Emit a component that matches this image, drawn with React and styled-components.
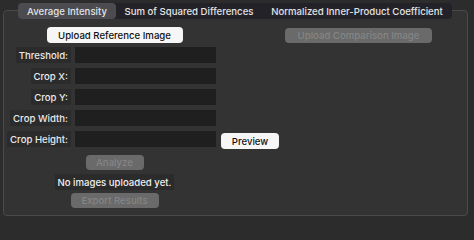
import React from 'react'
import styled, { createGlobalStyle } from 'styled-components'

const GlobalStyle = createGlobalStyle`
  html, body {
    margin: 0;
    padding: 0;
    background: #2c2c2c;
  }
  body {
    width: 474px;
    height: 222px;
    overflow: hidden;
    font-family: Inter, "Liberation Sans", sans-serif;
    font-size: 9.6px;
    font-weight: 500;
    color: #e6e6e6;
  }
`

const tabs = [
  { label: 'Average Intensity', width: 98, active: true },
  { label: 'Sum of Squared Differences', width: 146 },
  { label: 'Normalized Inner-Product Coefficient', width: 190 },
]

const fields = ['Threshold:', 'Crop X:', 'Crop Y:', 'Crop Width:', 'Crop Height:']

const Window = styled.div`
  display: flex;
  flex-direction: column;
  padding-top: 3px;
`

const TabBar = styled.div`
  position: relative;
  z-index: 1;
  display: flex;
  align-self: flex-start;
  margin-left: 18px;
  height: 16px;
  background: #232229;
  border-radius: 4px;
`

const Tab = styled.div`
  width: ${p => p.$width}px;
  display: flex;
  align-items: center;
  justify-content: center;
  border-radius: 4px;
  background: ${p => (p.$active ? '#4b4b50' : 'transparent')};
  color: #e4e4e4;
  white-space: nowrap;
`

const Panel = styled.div`
  margin: -9px 0 0 3px;
  width: 465px;
  height: 206px;
  box-sizing: border-box;
  border: 1px solid #4a4a4a;
  border-radius: 4px;
  background: #333333;
  padding: 16px 0 0 4px;
  display: grid;
  grid-template-columns: 67px 146px 64px 147px;
  grid-template-rows: 20px 21px 21px 21px 21px 23px 20px 19px 15px;
`

const Label = styled.div`
  grid-column: 1;
  justify-self: end;
  margin-right: 4px;
  height: 16px;
  padding: 0 3px;
  display: flex;
  align-items: center;
  background: #2b2b2b;
  color: #eaeaea;
  white-space: nowrap;
`

const Entry = styled.div`
  grid-column: 2;
  width: 141px;
  height: 16px;
  background: #1f1f1f;
`

const Button = styled.div`
  grid-column: ${p => p.$col};
  justify-self: ${p => p.$justify || 'start'};
  width: ${p => p.$width}px;
  height: ${p => p.$height || 16}px;
  box-sizing: border-box;
  display: flex;
  align-items: center;
  justify-content: center;
  border-radius: 4px;
  white-space: nowrap;
  background: ${p => (p.$disabled ? '#6a6a6a' : '#f6f6f6')};
  color: ${p => (p.$disabled ? '#858585' : '#111111')};
`

const Status = styled.div`
  grid-column: 1 / 3;
  justify-self: center;
  height: 16px;
  padding: 0 3px;
  display: flex;
  align-items: center;
  background: #2b2b2b;
  color: #f0f0f0;
`

export default function App() {
  return (
    <>
      <GlobalStyle />
      <Window>
        <TabBar>
          {tabs.map(t => (
            <Tab key={t.label} $width={t.width} $active={t.active}>{t.label}</Tab>
          ))}
        </TabBar>
        <Panel>
          <Button $col="1 / 3" $justify="center" $width={136}>Upload Reference Image</Button>
          <div />
          <Button $col={4} $width={147} $height={15} $disabled style={{ marginTop: 1 }}>Upload Comparison Image</Button>
          {fields.map((f, i) => (
            <React.Fragment key={f}>
              <Label>{f}</Label>
              <Entry />
              {i === fields.length - 1 && (
                <Button $col={3} $width={58} style={{ marginTop: 2 }}>Preview</Button>
              )}
            </React.Fragment>
          ))}
          <Button $col="1 / 3" $justify="center" $width={58} $height={15} $disabled style={{ marginTop: 1 }}>Analyze</Button>
          <Status>No images uploaded yet.</Status>
          <Button $col="1 / 3" $justify="center" $width={88} $height={15} $disabled>Export Results</Button>
        </Panel>
      </Window>
    </>
  )
}
